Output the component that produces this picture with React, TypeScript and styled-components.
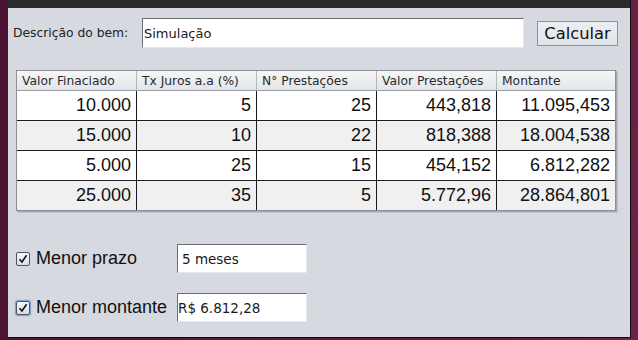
import styled, { createGlobalStyle } from "styled-components";

const GlobalStyle = createGlobalStyle`
  html, body {
    margin: 0;
    padding: 0;
  }
  body {
    width: 638px;
    height: 340px;
    overflow: hidden;
    font-family: "DejaVu Sans", sans-serif;
  }
`;

const Desktop = styled.div`
  width: 638px;
  height: 340px;
  box-sizing: border-box;
  padding: 0 7px 2px 8px;
  display: flex;
  background: linear-gradient(100deg, #4a1232 0%, #571838 40%, #5e1b3f 75%, #6a2449 100%);
`;

const Window = styled.div`
  flex: 1;
  display: flex;
  flex-direction: column;
  border-right: 1px solid #0d0d0d;
  border-bottom: 1px solid #0d0d0d;
`;

const TitleStrip = styled.div`
  height: 8px;
  background: #2b2a2b;
`;

const Content = styled.div`
  flex: 1;
  background: #d6d9e0;
  padding: 10px 0 0 0;
  display: flex;
  flex-direction: column;
`;

const TopRow = styled.div`
  display: flex;
  align-items: center;
  padding-left: 5px;
`;

const Label = styled.label`
  width: 129px;
  font-size: 12.3px;
  color: #222;
`;

const TextField = styled.div<{ $w: number; $h: number; $pad: number; $size: number }>`
  width: ${(p) => p.$w}px;
  height: ${(p) => p.$h}px;
  box-sizing: border-box;
  background: #fff;
  border-top: 1px solid #6b6e73;
  border-left: 1px solid #6b6e73;
  border-right: 1px solid #e6e8ec;
  border-bottom: 1px solid #e6e8ec;
  padding-left: ${(p) => p.$pad}px;
  display: flex;
  align-items: center;
  font-size: ${(p) => p.$size}px;
  color: #1a1a1a;
`;

const Button = styled.button`
  margin-left: 13px;
  width: 81px;
  height: 25px;
  box-sizing: border-box;
  border: 1px solid #8e9196;
  background: linear-gradient(#eceef1, #e1e4e8);
  font-family: "DejaVu Sans", sans-serif;
  font-size: 16.3px;
  color: #111;
  padding: 0;
`;

const Table = styled.div`
  margin: 22px 0 0 8px;
  width: 600px;
  box-sizing: border-box;
  border: 1px solid #8d9096;
  box-shadow: 1px 1px 0 #a4a7ad, 2px 2px 0 #c0c3c9;
  display: grid;
  grid-template-columns: 120px 120px 120px 120px 1fr;
  background: #fff;
`;

const HeadCell = styled.div<{ $last?: boolean }>`
  height: 20px;
  box-sizing: border-box;
  padding-left: 5px;
  display: flex;
  align-items: center;
  font-size: 12.3px;
  color: #2a2a2a;
  white-space: nowrap;
  background: linear-gradient(#f5f6f7, #e2e5e9);
  border-bottom: 1px solid #9a9ea4;
  border-right: ${(p) => (p.$last ? "none" : "1px solid #b3b7bd")};
`;

const Cell = styled.div<{ $alt: boolean; $last: boolean; $bottom: boolean }>`
  height: ${(p) => (p.$bottom ? 29 : 30)}px;
  box-sizing: border-box;
  padding-right: 5px;
  display: flex;
  align-items: center;
  justify-content: flex-end;
  font-family: "Liberation Sans", Arial, sans-serif;
  font-size: 18px;
  color: #111;
  background: ${(p) => (p.$alt ? "#f0f0f0" : "#ffffff")};
  border-right: ${(p) => (p.$last ? "none" : "1px solid #1c1c1c")};
  border-bottom: ${(p) => (p.$bottom ? "none" : "1px solid #1c1c1c")};
`;

const Options = styled.div`
  margin: 33px 0 0 8px;
  display: grid;
  grid-template-columns: 161px 130px;
  row-gap: 20px;
  align-items: center;
`;

const CheckRow = styled.div`
  display: flex;
  align-items: center;
  gap: 6px;
  font-family: "Liberation Sans", Arial, sans-serif;
  font-size: 18px;
  color: #111;
`;

const Box = styled.span<{ $focus?: boolean }>`
  width: 14px;
  height: 14px;
  box-sizing: border-box;
  border: 1px solid #4d5560;
  border-radius: 2px;
  background: linear-gradient(#f8f9fb, #d9dde3);
  display: flex;
  align-items: center;
  justify-content: center;
  box-shadow: ${(p) => (p.$focus ? "0 0 0 1px #7fa6d6, 0 0 2px 1px #9dbbe2" : "none")};
`;

const Check = () => (
  <svg width="10" height="10" viewBox="0 0 10 10">
    <path d="M1.5 5.2 L4 8 L8.6 1.2" fill="none" stroke="#111" strokeWidth="1.6" />
  </svg>
);

const headers = ["Valor Finaciado", "Tx Juros a.a (%)", "N° Prestações", "Valor Prestações", "Montante"];
const rows = [
  ["10.000", "5", "25", "443,818", "11.095,453"],
  ["15.000", "10", "22", "818,388", "18.004,538"],
  ["5.000", "25", "15", "454,152", "6.812,282"],
  ["25.000", "35", "5", "5.772,96", "28.864,801"],
];

export default function App() {
  return (
    <>
      <GlobalStyle />
      <Desktop>
        <Window>
          <TitleStrip />
          <Content>
            <TopRow>
              <Label>Descrição do bem:</Label>
              <TextField $w={382} $h={30} $pad={1} $size={13}>
                Simulação
              </TextField>
              <Button>Calcular</Button>
            </TopRow>

            <Table>
              {headers.map((h, i) => (
                <HeadCell key={h} $last={i === headers.length - 1}>
                  {h}
                </HeadCell>
              ))}
              {rows.map((r, ri) =>
                r.map((v, ci) => (
                  <Cell
                    key={`${ri}-${ci}`}
                    $alt={ri % 2 === 1}
                    $last={ci === r.length - 1}
                    $bottom={ri === rows.length - 1}
                  >
                    {v}
                  </Cell>
                ))
              )}
            </Table>

            <Options>
              <CheckRow>
                <Box>
                  <Check />
                </Box>
                Menor prazo
              </CheckRow>
              <TextField $w={130} $h={29} $pad={4} $size={13.5}>
                5 meses
              </TextField>
              <CheckRow>
                <Box $focus>
                  <Check />
                </Box>
                Menor montante
              </CheckRow>
              <TextField $w={130} $h={29} $pad={0} $size={13.5}>
                R$ 6.812,28
              </TextField>
            </Options>
          </Content>
        </Window>
      </Desktop>
    </>
  );
}
